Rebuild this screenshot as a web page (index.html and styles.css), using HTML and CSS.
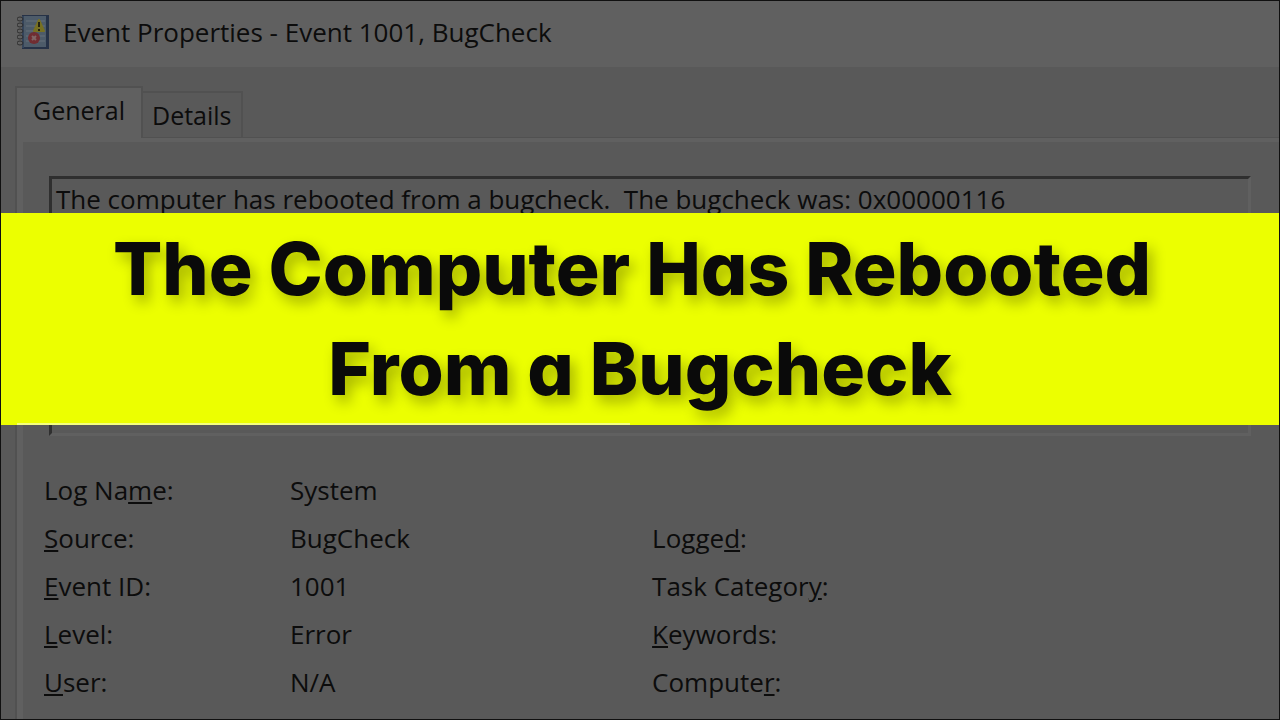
FILE: index.html
```html
<!DOCTYPE html>
<html lang="en">
<head>
    <meta charset="UTF-8">
    <meta name="viewport" content="width=device-width, initial-scale=1.0">
    <title>Event Properties - Event 1001, BugCheck</title>
    <link rel="stylesheet" href="styles.css">
</head>
<body>
    <div class="window">
        <header class="titlebar">
            <svg class="app-icon" viewBox="0 0 34 36" aria-hidden="true">
                <rect x="5" y="1" width="27" height="34" fill="#263247"/>
                <rect x="6" y="2" width="23" height="31" fill="#4d5b69"/>
                <path d="M9 7h19M9 12h19M9 17h19M9 22h19M9 27h19" stroke="#66707a" stroke-width="1"/>
                <path d="M6 2v32" stroke="#34445a" stroke-width="2"/>
                <g fill="none" stroke="#303030" stroke-width="1">
                    <ellipse cx="3" cy="5" rx="3" ry="2"/>
                    <ellipse cx="3" cy="11" rx="3" ry="2"/>
                    <ellipse cx="3" cy="17" rx="3" ry="2"/>
                    <ellipse cx="3" cy="23" rx="3" ry="2"/>
                    <ellipse cx="3" cy="29" rx="3" ry="2"/>
                </g>
                <path d="M22 6l5 11H17z" fill="#777022" stroke="#777022" stroke-width="2" stroke-linejoin="round"/>
                <path d="M22 8v5M22 15v2" stroke="#25230f" stroke-width="2"/>
                <circle cx="17" cy="24" r="6" fill="#702d32"/>
                <path d="M15 22l4 4M19 22l-4 4" stroke="#806767" stroke-width="2"/>
            </svg>
            <span>Event Properties - Event 1001, BugCheck</span>
        </header>

        <div class="tabs" role="tablist">
            <button class="tab active" role="tab" aria-selected="true">General</button>
            <button class="tab" role="tab" aria-selected="false">Details</button>
        </div>

        <main class="panel">
            <div class="message-box">
                <textarea class="message" aria-label="Event description" readonly>The computer has rebooted from a bugcheck.  The bugcheck was: 0x00000116</textarea>
            </div>
            <table class="details">
                <tr><th>Log Na<u>m</u>e:</th><td>System</td><th></th></tr>
                <tr><th><u>S</u>ource:</th><td>BugCheck</td><th>Logge<u>d</u>:</th></tr>
                <tr><th><u>E</u>vent ID:</th><td>1001</td><th>Task Categor<u>y</u>:</th></tr>
                <tr><th><u>L</u>evel:</th><td>Error</td><th><u>K</u>eywords:</th></tr>
                <tr><th><u>U</u>ser:</th><td>N/A</td><th>Compute<u>r</u>:</th></tr>
            </table>
        </main>

        <h1 class="banner">The Computer Has Rebooted&nbsp;<br>From a Bugcheck</h1>
    </div>
</body>
</html>
```
FILE: styles.css
```css
* {
    box-sizing: border-box;
}
body {
    margin: 0;
    background: #595959;
    color: #0c0c0c;
    font-family: "Open Sans", "Noto Sans", sans-serif;
    font-size: 26px;
}
.window {
    position: relative;
    min-height: 100vh;
    border: 1px solid #101010;
    overflow: hidden;
    display: flex;
    flex-direction: column;
}
.titlebar {
    display: flex;
    align-items: center;
    gap: 12px;
    height: 66px;
    padding: 0 16px 4px;
    background: #606060;
}
.app-icon {
    width: 34px;
    height: 36px;
}
.tabs {
    display: flex;
    align-items: flex-end;
    height: 70px;
    padding-left: 14px;
}
.tab {
    height: 46px;
    padding: 0 9px;
    border: 2px solid #515151;
    border-left: none;
    border-bottom: none;
    background: #595959;
    color: inherit;
    font: inherit;
    font-size: 25px;
}
.tab.active {
    position: relative;
    height: 52px;
    margin-bottom: -1px;
    padding: 0 16px 6px;
    border-left: 2px solid #515151;
    background: #606060;
}
/* light edge inside the tab page */
.panel {
    flex: 1;
    margin-left: 14px;
    padding: 38px 28px 0 27px;
    border-left: 2px solid #515151;
    border-top: 1px solid #515151;
    box-shadow: inset 6px 4px 0 #606060;
}
.message-box {
    padding-left: 5px;
}
.message {
    display: block;
    width: 100%;
    height: 260px;
    padding: 2px 4px;
    border: 3px solid;
    border-color: #2f2f2f #606060 #606060 #2f2f2f;
    outline: none;
    resize: none;
    background: #595959;
    color: inherit;
    font: inherit;
}
.details {
    width: 100%;
    margin-top: 30px;
    border-collapse: collapse;
    table-layout: fixed;
}
.details th,
.details td {
    height: 48px;
    padding: 0;
    font-weight: normal;
    text-align: left;
}
.details th:first-child {
    width: 246px;
}
.details td {
    width: 30%;
}
.banner {
    position: absolute;
    top: 212px;
    left: 0;
    right: 0;
    margin: 0;
    padding: 6px 0;
    background: #ecff00;
    color: #0a0a0a;
    font-family: Inter, sans-serif;
    font-size: 73px;
    font-weight: 800;
    font-feature-settings: "cv11";
    line-height: 100px;
    text-align: center;
    text-shadow: 5px 7px 14px rgba(0, 0, 0, 0.3);
}
/* thin highlight along the lower edge */
.banner::after {
    content: "";
    position: absolute;
    left: 16px;
    bottom: 0;
    width: 48%;
    height: 2px;
    background: #f4ff80;
}
```
